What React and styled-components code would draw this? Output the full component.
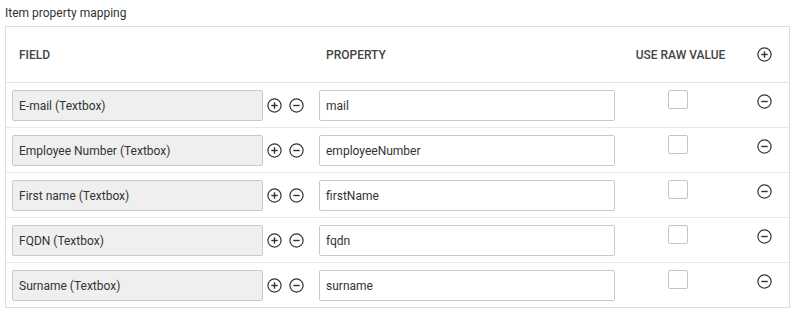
import React from 'react';
import styled, {createGlobalStyle} from 'styled-components';

const Global = createGlobalStyle`
  body {
    margin: 0;
    background: #fff;
    font-family: Roboto, "Liberation Sans", sans-serif;
    color: #333;
  }
`;

const Page = styled.div`
  padding: 0 8px 0 5px;
`;

const Title = styled.div`
  font-size: 12px;
  line-height: 16px;
  padding: 5px 0 5px;
  color: #333;
`;

const Table = styled.div`
  width: 783px;
  border: 1px solid #dcdcdc;
  display: grid;
  grid-template-columns: 306px 309px 119px 1fr;
`;

const Head = styled.div`
  height: 55px;
  display: flex;
  align-items: center;
  justify-content: ${p => (p.center ? 'center' : 'flex-start')};
  padding-left: ${p => p.pad || 0}px;
  font-size: 12px;
  font-weight: 500;
  color: #444;
  border-bottom: 1px solid #e4e4e4;
`;

const Cell = styled.div`
  height: ${p => (p.last ? 44 : 45)}px;
  box-sizing: border-box;
  padding: 7px 7px 6px ${p => p.left || 6}px;
  display: flex;
  align-items: ${p => (p.top ? 'flex-start' : 'center')};
  justify-content: ${p => (p.center ? 'center' : 'flex-start')};
  border-bottom: ${p => (p.last ? 'none' : '1px solid #e8e8e8')};
`;

const Input = styled.div`
  box-sizing: border-box;
  height: 31px;
  width: ${p => p.w}px;
  flex: none;
  border: 1px solid #c9c9c9;
  border-radius: 2px;
  background: ${p => (p.readOnly ? '#efefef' : '#fff')};
  padding-left: 6px;
  display: flex;
  align-items: center;
  font-size: 12px;
  color: #333;
`;

const Icons = styled.div`
  display: flex;
  gap: 7px;
  margin-left: 4px;
`;

const Checkbox = styled.div`
  width: 20px;
  height: 19px;
  box-sizing: border-box;
  border: 1px solid #c4c4c4;
  border-radius: 2px;
  margin-right: 5px;
`;

const ActionIcon = styled.div`
  padding-top: ${p => p.top || 0}px;
  display: flex;
`;

function CircleIcon({plus}) {
  return (
    <svg width="15" height="15" viewBox="0 0 15 15">
      <circle cx="7.5" cy="7.5" r="6.6" fill="none" stroke="#333" strokeWidth="1.2" />
      <line x1="4.3" y1="7.5" x2="10.7" y2="7.5" stroke="#333" strokeWidth="1.4" />
      {plus && <line x1="7.5" y1="4.3" x2="7.5" y2="10.7" stroke="#333" strokeWidth="1.4" />}
    </svg>
  );
}

const rows = [
  ['E-mail (Textbox)', 'mail'],
  ['Employee Number (Textbox)', 'employeeNumber'],
  ['First name (Textbox)', 'firstName'],
  ['FQDN (Textbox)', 'fqdn'],
  ['Surname (Textbox)', 'surname'],
];

export default function App() {
  return (
    <Page>
      <Global />
      <Title>Item property mapping</Title>
      <Table>
        <Head pad={13}>FIELD</Head>
        <Head pad={14}>PROPERTY</Head>
        <Head center>USE RAW VALUE</Head>
        <Head center>
          <CircleIcon plus />
        </Head>
        {rows.map(([field, prop], i) => {
          const last = i === rows.length - 1;
          return (
            <React.Fragment key={field}>
              <Cell last={last}>
                <Input readOnly w={251}>{field}</Input>
                <Icons>
                  <CircleIcon plus />
                  <CircleIcon />
                </Icons>
              </Cell>
              <Cell last={last} left={7}>
                <Input w={296}>{prop}</Input>
              </Cell>
              <Cell last={last} top center>
                <Checkbox />
              </Cell>
              <Cell last={last} top center>
                <ActionIcon top={4}>
                  <CircleIcon />
                </ActionIcon>
              </Cell>
            </React.Fragment>
          );
        })}
      </Table>
    </Page>
  );
}
